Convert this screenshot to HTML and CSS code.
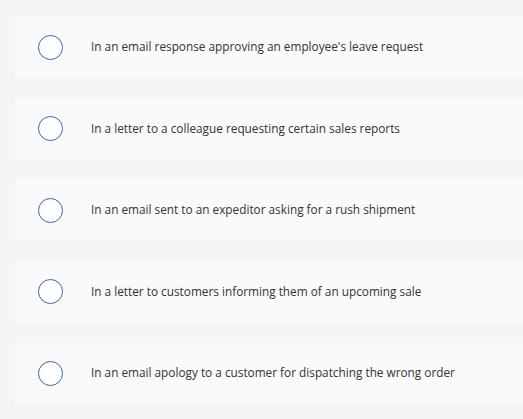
FILE: index.html
```html
<!DOCTYPE html>
<html>
<head>
<meta charset="utf-8">
<link rel="stylesheet" href="styles.css">
</head>
<body>
<div class="options">
  <div class="option"><span class="radio"></span><span class="label">In an email response approving an employee's leave request</span></div>
  <div class="option"><span class="radio"></span><span class="label">In a letter to a colleague requesting certain sales reports</span></div>
  <div class="option"><span class="radio"></span><span class="label">In an email sent to an expeditor asking for a rush shipment</span></div>
  <div class="option"><span class="radio"></span><span class="label">In a letter to customers informing them of an upcoming sale</span></div>
  <div class="option"><span class="radio"></span><span class="label">In an email apology to a customer for dispatching the wrong order</span></div>
</div>
</body>
</html>
```

FILE: styles.css
```css
html, body {
  margin: 0;
  padding: 0;
  background: #f5f5f5;
}
.options {
  display: flex;
  flex-direction: column;
  gap: 21.5px;
  padding: 17px 0 0 15px;
}
.option {
  display: flex;
  align-items: center;
  height: 60px;
  background: #fafafa;
  padding-left: 23px;
}
.radio {
  box-sizing: border-box;
  width: 25px;
  height: 25px;
  border: 1.5px solid #3b6aa0;
  border-radius: 50%;
  background: #fff;
  flex: none;
}
.label {
  margin-left: 28px;
  font-family: "Open Sans", "Liberation Sans", sans-serif;
  font-size: 11.8px;
  color: #333;
  position: relative;
  top: -1px;
}
```
